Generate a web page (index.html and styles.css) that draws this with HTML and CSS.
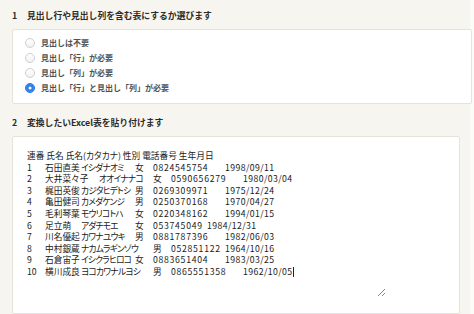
FILE: index.html
```html
<!DOCTYPE html>
<html lang="ja">

<head>
    <meta charset="utf-8">
    <link rel="stylesheet" href="styles.css">
</head>

<body>
    <div class="page">
        <h2 class="step"><span class="num">1</span>見出し行や見出し列を含む表にするか選びます</h2>
        <div class="box choices">
            <label class="choice"><input type="radio" name="header" value="none"><span>見出しは不要</span></label>
            <label class="choice"><input type="radio" name="header" value="row"><span>見出し「行」が必要</span></label>
            <label class="choice"><input type="radio" name="header" value="col"><span>見出し「列」が必要</span></label>
            <label class="choice"><input type="radio" name="header" value="both" checked><span>見出し「行」と見出し「列」が必要</span></label>
        </div>

        <h2 class="step"><span class="num">2</span>変換したいExcel表を貼り付けます</h2>
        <div class="box paste">
            <div class="source" role="textbox" aria-multiline="true"><span class="head">連番 氏名 氏名(カタカナ) 性別 電話番号 生年月日</span>
1	石田直美	<span class="kana">イシダナオミ</span>	女	<span class="tel">0824545754</span>	<span class="date">1998/09/11</span>
2	大井菜々子	<span class="kana">オオイナナコ</span>	女	<span class="tel">0590656279</span>	<span class="date">1980/03/04</span>
3	梶田英俊	<span class="kana">カジタヒデトシ</span>	男	<span class="tel">0269309971</span>	<span class="date">1975/12/24</span>
4	亀田健司	<span class="kana">カメダケンジ</span>	男	<span class="tel">0250370168</span>	<span class="date">1970/04/27</span>
5	毛利琴葉	<span class="kana">モウリコトハ</span>	女	<span class="tel">0220348162</span>	<span class="date">1994/01/15</span>
6	足立萌	<span class="kana">アダチモエ</span>	女	<span class="tel short">053745049</span>	<span class="date">1984/12/31</span>
7	川名優起	<span class="kana">カワナユウキ</span>	男	<span class="tel">0881787396</span>	<span class="date">1982/06/03</span>
8	中村銀蔵	<span class="kana long">ナカムラギンゾウ</span>	男	<span class="tel short">052851122</span>	<span class="date">1964/10/16</span>
9	石倉宙子	<span class="kana">イシクラヒロコ</span>	女	<span class="tel">0883651404</span>	<span class="date">1983/03/25</span>
10	横川成良	<span class="kana long">ヨコカワナルヨシ</span>	男	<span class="tel">0865551358</span>	<span class="date">1962/10/05</span><span class="caret"></span></div>
        </div>
    </div>
</body>

</html>
```

FILE: styles.css
```css
html,
body {
    margin: 0;
    background: #fbfbf8;
}

body {
    font-family: "Noto Sans CJK JP", "Noto Sans", sans-serif;
    color: #333;
}

.page {
    width: 470px;
    height: 314px;
    box-sizing: border-box;
    padding: 9px 12px 0 12px;
    background: #f6f5ef;
}

.step {
    font-size: 8.8px;
    font-weight: bold;
    line-height: 14px;
    margin: 0 0 6px 0;
    color: #2b2b2b;
}

.step .num {
    display: inline-block;
    width: 15px;
}

.box {
    background: #fff;
    border: 1px solid #e4e3dc;
    border-radius: 2px;
}

.choices {
    width: 446px;
    padding: 5px 0 8px 12px;
    margin-bottom: 12px;
}

.choice {
    display: flex;
    align-items: center;
    height: 15px;
    font-size: 8px;
    font-weight: bold;
    color: #505050;
}

.choice input {
    -webkit-appearance: none;
    appearance: none;
    width: 10px;
    height: 10px;
    margin: 0 6px 0 0;
    border: 1px solid #cfcfcf;
    border-radius: 50%;
    background: linear-gradient(#fff, #f2f2f2);
    box-sizing: border-box;
}

.choice input:checked {
    border-color: #2a78e4;
    background: #2f7fe9;
    box-shadow: inset 0 0 0 2.5px #2f7fe9, inset 0 0 0 5px #fff;
}

.paste {
    width: 436px;
    height: 167px;
    padding: 9px 0 0 10px;
    box-sizing: content-box;
}

.source {
    position: relative;
    width: 365px;
    height: 153px;
    box-sizing: border-box;
    padding: 4px;
    font-size: 8.7px;
    line-height: 11.6px;
    color: #1a1a1a;
    tab-size: 18px;
    -moz-tab-size: 18px;
    white-space: pre;
    overflow: hidden;
}

.source .head {
    font-feature-settings: "palt";
}

/* cells sized so the next tab lands on the same stop as the original paste */
.source .kana {
    display: inline-block;
    width: 49px;
    font-feature-settings: "palt";
    letter-spacing: -0.75px;
}

.source .kana.long {
    width: 66px;
}

.source .tel {
    display: inline-block;
    width: 56px;
    letter-spacing: 0.7px;
}

.source .tel.short {
    width: 48px;
}

.source .date {
    letter-spacing: 0.4px;
}

.source .caret {
    display: inline-block;
    width: 1px;
    height: 10px;
    margin-left: 1px;
    background: #222;
    vertical-align: -2px;
}

/* resize grip */
.source::after {
    content: "";
    position: absolute;
    right: 3px;
    bottom: 3px;
    width: 7px;
    height: 7px;
    background: linear-gradient(135deg, transparent 46%, #8a8a8a 46%, #8a8a8a 56%, transparent 56%, transparent 74%, #8a8a8a 74%, #8a8a8a 84%, transparent 84%);
}
```
